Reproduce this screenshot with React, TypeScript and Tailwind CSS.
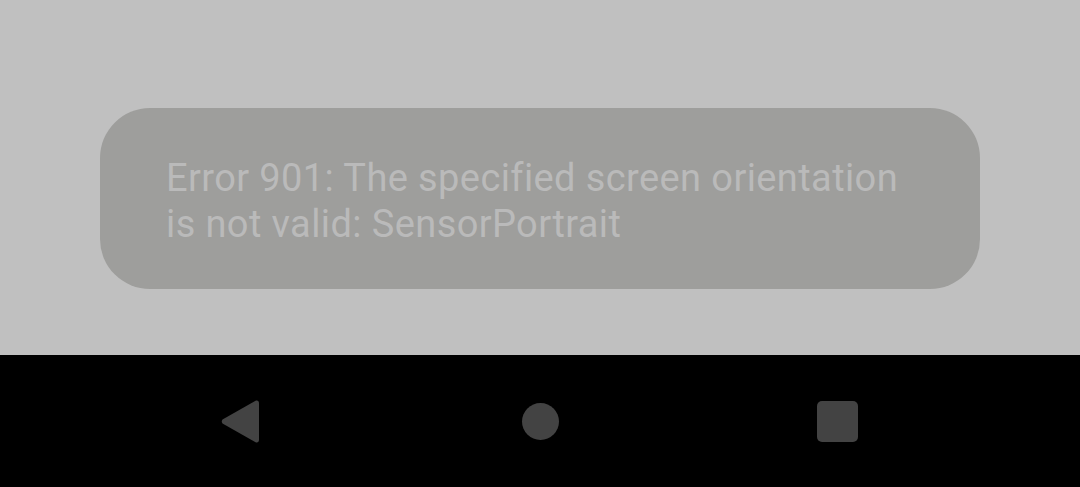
const App = () => {
  return (
    <div className="w-[1080px] h-[487px] flex flex-col bg-black overflow-hidden" style={{ fontFamily: "Roboto, 'Noto Sans', sans-serif" }}>
      <div className="h-[355px] bg-[#c0c0c0] pt-[108px] px-[100px]">
        <div className="h-[181px] rounded-[50px] bg-[#9e9e9c] flex items-center pl-[66px] pr-[40px] pt-[5px]">
          <p className="text-[38px] leading-[46px] text-[#bababa] tracking-[0.4px] whitespace-nowrap">
            Error 901: The specified screen orientation
            <br />
            is not valid: SensorPortrait
          </p>
        </div>
      </div>

      <div className="flex-1 bg-black relative">
        {/* back */}
        <svg className="absolute left-[221px] top-[45px]" width="38" height="43" viewBox="0 0 38 43">
          <path d="M35 0.5 Q38 0 38 3.5 L38 39.5 Q38 43 35 42.5 L1.5 23.5 Q0 21.5 1.5 19.5 Z" fill="#434343" />
        </svg>
        {/* home */}
        <div className="absolute left-[522px] top-[48px] w-[37px] h-[37px] rounded-full bg-[#434343]" />
        {/* recents */}
        <div className="absolute left-[817px] top-[46px] w-[41px] h-[41px] rounded-[5px] bg-[#434343]" />
      </div>
    </div>
  )
}

export default App
